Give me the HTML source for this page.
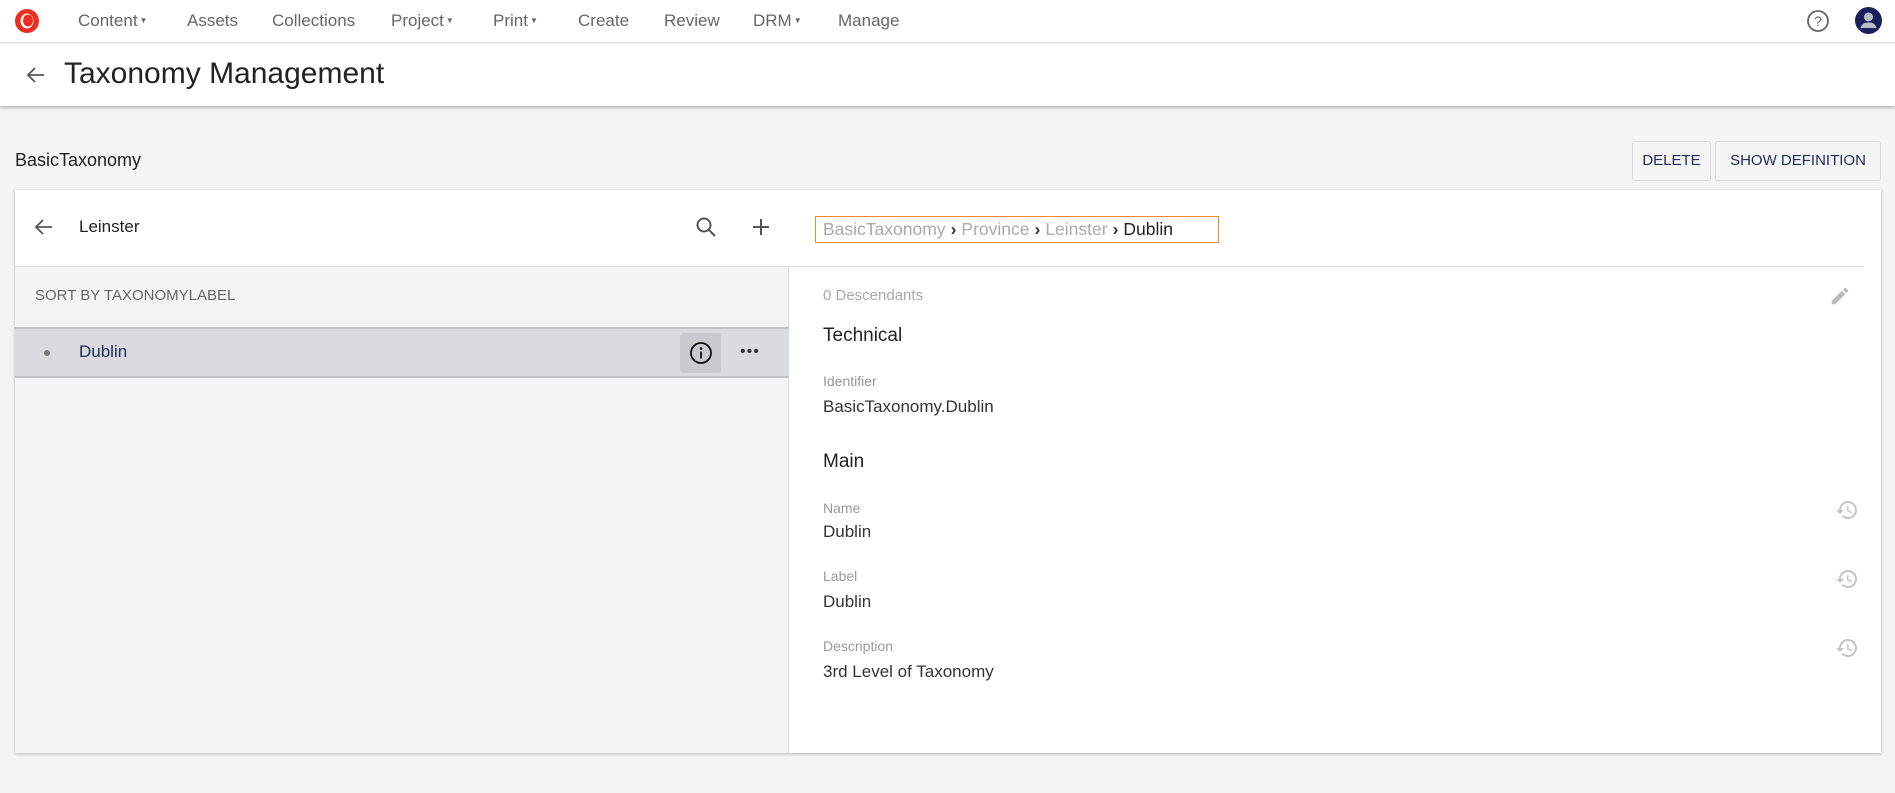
<!DOCTYPE html>
<html><head><meta charset="utf-8"><style>
*{box-sizing:border-box;margin:0;padding:0}
body{width:1895px;height:793px;background:#f4f4f4;font-family:"Liberation Sans",sans-serif;position:relative;overflow:hidden;color:#222}
.a{position:absolute;white-space:nowrap}
.nav{position:absolute;left:0;top:0;width:1895px;height:43px;background:#fff;border-bottom:1px solid #ddd}
.nav .n{position:absolute;top:11px;font-size:17px;color:#666}
.car{font-size:8px;vertical-align:3px;margin-left:2px}
.hdr{position:absolute;left:0;top:44px;width:1895px;height:62px;background:#fff;box-shadow:0 2px 3px rgba(0,0,0,.25)}
.btn{position:absolute;top:141px;height:40px;border:1px solid #ddd;border-radius:3px;background:#f4f4f4;color:#1f2a5c;font-size:15px;text-align:center;line-height:38px}
.card{position:absolute;left:15px;top:190px;width:1866px;height:563px;background:#fff;box-shadow:0 1px 3px rgba(0,0,0,.25)}
.lbl{font-size:14px;color:#999}
.val{font-size:17px;color:#333}
.h{font-size:19px;color:#222}
.ch{color:#333;font-weight:bold;margin:0 5px}
</style></head><body>
<div class="nav">
<svg class="a" style="left:14px;top:8px" width="26" height="26" viewBox="0 0 26 26"><circle cx="13" cy="13" r="12" fill="#ee2c1f"/><ellipse cx="13" cy="13" rx="6.5" ry="7.5" fill="#fff"/><ellipse cx="14" cy="12.5" rx="5" ry="6" fill="#ee2c1f"/></svg>
<div class="n" style="left:78px">Content<span class="car">▼</span></div>
<div class="n" style="left:187px">Assets</div>
<div class="n" style="left:272px">Collections</div>
<div class="n" style="left:391px">Project<span class="car">▼</span></div>
<div class="n" style="left:493px">Print<span class="car">▼</span></div>
<div class="n" style="left:578px">Create</div>
<div class="n" style="left:664px">Review</div>
<div class="n" style="left:753px">DRM<span class="car">▼</span></div>
<div class="n" style="left:838px">Manage</div>
<svg class="a" style="left:1806px;top:9px" width="24" height="24" viewBox="0 0 24 24"><circle cx="12" cy="12" r="10" fill="none" stroke="#666" stroke-width="1.8"/><text x="12" y="17" font-size="14" text-anchor="middle" fill="#666" font-family="Liberation Sans">?</text></svg>
<svg class="a" style="left:1855px;top:7px" width="27" height="27" viewBox="0 0 27 27"><circle cx="13.5" cy="13.5" r="13.5" fill="#1b1f5a"/><circle cx="13.5" cy="10" r="4.5" fill="#b8bccb"/><path d="M5.5 21c1-4 4-5.5 8-5.5s7 1.5 8 5.5z" fill="#b8bccb"/></svg>
</div>
<div class="hdr">
<svg class="a" style="left:26px;top:21px" width="20" height="20" viewBox="0 0 20 20"><path d="M18 10H3M9 3L2 10l7 7" fill="none" stroke="#555" stroke-width="1.8"/></svg>
<div class="a" style="left:64px;top:13px;font-size:30px;color:#222">Taxonomy Management</div>
</div>
<div class="a" style="left:15px;top:150px;font-size:18px;color:#222">BasicTaxonomy</div>
<div class="btn" style="left:1632px;width:79px">DELETE</div>
<div class="btn" style="left:1715px;width:166px">SHOW DEFINITION</div>
<div class="card">
<svg class="a" style="left:19px;top:27px" width="20" height="20" viewBox="0 0 20 20"><path d="M18 10H3M9 3L2 10l7 7" fill="none" stroke="#555" stroke-width="1.8"/></svg>
<div class="a" style="left:64px;top:27px;font-size:17px;color:#222">Leinster</div>
<svg class="a" style="left:680px;top:26px" width="22" height="22" viewBox="0 0 22 22"><circle cx="9" cy="9" r="6.5" fill="none" stroke="#555" stroke-width="2"/><path d="M14 14l6 6" stroke="#555" stroke-width="2"/></svg>
<svg class="a" style="left:736px;top:27px" width="20" height="20" viewBox="0 0 20 20"><path d="M10 2v16M2 10h16" stroke="#555" stroke-width="2"/></svg>
<div class="a" style="left:800px;top:26px;width:404px;height:27px;border:1.5px solid #f08a30;font-size:17.5px;line-height:24px;padding-left:7px;color:#aaa">BasicTaxonomy<span class="ch">›</span>Province<span class="ch">›</span>Leinster<span class="ch">›</span><span style="color:#222">Dublin</span></div>
<div class="a" style="left:0;top:76px;width:1849px;height:1px;background:#ddd"></div>
<div class="a" style="left:0;top:77px;width:774px;height:486px;background:#f4f4f4;border-right:1px solid #ddd"></div>
<div class="a" style="left:20px;top:97px;font-size:15px;color:#666">SORT BY TAXONOMYLABEL</div>
<div class="a" style="left:0;top:137px;width:774px;height:51px;background:#dadbe0;border-top:2px solid #c3c4c8;border-bottom:2px solid #c3c4c8"></div>
<div class="a" style="left:29px;top:160px;width:6px;height:6px;border-radius:50%;background:#777"></div>
<div class="a" style="left:64px;top:152px;font-size:17px;color:#1f2a5c">Dublin</div>
<div class="a" style="left:665px;top:143px;width:41px;height:40px;background:#c9cacf;border-radius:3px"></div>
<svg class="a" style="left:674px;top:151px" width="24" height="24" viewBox="0 0 24 24"><circle cx="12" cy="12" r="10" fill="none" stroke="#111" stroke-width="1.8"/><circle cx="12" cy="7.5" r="1.3" fill="#111"/><path d="M12 10.5v7" stroke="#111" stroke-width="1.8"/></svg>
<div class="a" style="left:725px;top:153px;font-size:16px;color:#333;letter-spacing:1px">•••</div>
<div class="a lbl" style="left:808px;top:97px;font-size:15px;color:#aaa">0 Descendants</div>
<svg class="a" style="left:1814px;top:95px" width="22" height="22" viewBox="0 0 24 24"><path d="M3 17.25V21h3.75L17.81 9.94l-3.75-3.75zM20.71 7.04a1 1 0 000-1.41l-2.34-2.34a1 1 0 00-1.41 0l-1.83 1.83 3.75 3.75z" fill="#bbb"/></svg>
<div class="a h" style="left:808px;top:135px">Technical</div>
<div class="a lbl" style="left:808px;top:183px">Identifier</div>
<div class="a val" style="left:808px;top:207px">BasicTaxonomy.Dublin</div>
<div class="a h" style="left:808px;top:261px">Main</div>
<div class="a lbl" style="left:808px;top:310px">Name</div>
<div class="a val" style="left:808px;top:332px">Dublin</div>
<div class="a lbl" style="left:808px;top:378px">Label</div>
<div class="a val" style="left:808px;top:402px">Dublin</div>
<div class="a lbl" style="left:808px;top:448px">Description</div>
<div class="a val" style="left:808px;top:472px">3rd Level of Taxonomy</div>
<svg class="a" style="left:1820px;top:308px" width="24" height="24" viewBox="0 0 24 24"><path d="M13 3a9 9 0 00-9 9H1l4 4 4-4H6a7 7 0 112.05 4.95l-1.42 1.42A9 9 0 1013 3zm-1 5v5l4.25 2.52.77-1.28-3.52-2.09V8z" fill="#c4c4c4"/></svg>
<svg class="a" style="left:1820px;top:377px" width="24" height="24" viewBox="0 0 24 24"><path d="M13 3a9 9 0 00-9 9H1l4 4 4-4H6a7 7 0 112.05 4.950l-1.42 1.42A9 9 0 1013 3zm-1 5v5l4.25 2.52.77-1.28-3.52-2.09V8z" fill="#c4c4c4"/></svg>
<svg class="a" style="left:1820px;top:446px" width="24" height="24" viewBox="0 0 24 24"><path d="M13 3a9 9 0 00-9 9H1l4 4 4-4H6a7 7 0 112.05 4.95l-1.42 1.42A9 9 0 1013 3zm-1 5v5l4.25 2.52.77-1.28-3.52-2.09V8z" fill="#c4c4c4"/></svg>
</div>
</body></html>
